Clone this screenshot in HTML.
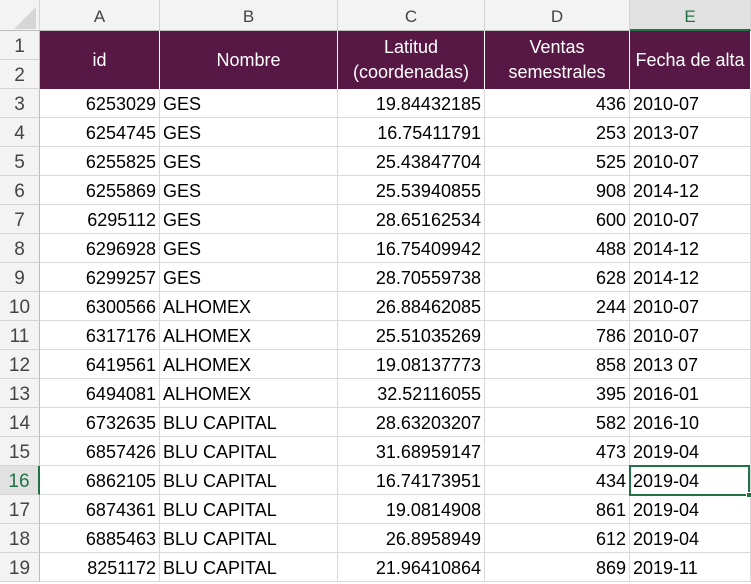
<!DOCTYPE html><html><head><style>
body{margin:0;width:751px;height:583px;overflow:hidden;background:#fff;font-family:"Liberation Sans",Arial,sans-serif;position:relative}
div{position:absolute;box-sizing:border-box}
.ch{top:0;height:31px;background:#f3f3f3;border-right:1px solid #d4d4d4;border-bottom:1px solid #bdbdbd;color:#444;font-size:17px;text-align:center;line-height:34px}
.rh{left:0;width:40px;background:#f3f3f3;border-right:1px solid #bdbdbd;border-bottom:1px solid #d4d4d4;color:#444;font-size:19px;text-align:center;line-height:31px}
.c{height:29px;border-right:1px solid #d9d9d9;border-bottom:1px solid #d9d9d9;font-size:18px;line-height:31px;color:#000;white-space:nowrap;padding:0 3px}
.r{text-align:right}
.h{top:31px;height:58px;background:#581845;color:#fff;border-right:1px solid #fff;font-size:18px;text-align:center;display:flex;align-items:center;justify-content:center;line-height:25px}
</style></head><body>
<div class="ch" style="left:0;width:40px;background:#f3f3f3"></div>
<svg style="position:absolute;left:14px;top:7px" width="22" height="22"><polygon points="22,0 22,22 0,22" fill="#d6d6d6"/></svg>
<div class="ch" style="left:40px;width:120px">A</div>
<div class="ch" style="left:160px;width:178px">B</div>
<div class="ch" style="left:338px;width:147px">C</div>
<div class="ch" style="left:485px;width:145px">D</div>
<div class="ch" style="left:630px;width:121px;background:#e1e1e1;color:#217346;border-bottom:2px solid #217346">E</div>
<div class="rh" style="top:31px;height:29px">1</div>
<div class="rh" style="top:60px;height:29px">2</div>
<div class="h" style="left:40px;width:120px">id</div>
<div class="h" style="left:160px;width:178px">Nombre</div>
<div class="h" style="left:338px;width:147px">Latitud<br>(coordenadas)</div>
<div class="h" style="left:485px;width:145px">Ventas<br>semestrales</div>
<div class="h" style="left:630px;width:121px">Fecha de alta</div>
<div id="rows"></div>
<script>
var d=[["6253029","GES","19.84432185","436","2010-07"],["6254745","GES","16.75411791","253","2013-07"],["6255825","GES","25.43847704","525","2010-07"],["6255869","GES","25.53940855","908","2014-12"],["6295112","GES","28.65162534","600","2010-07"],["6296928","GES","16.75409942","488","2014-12"],["6299257","GES","28.70559738","628","2014-12"],["6300566","ALHOMEX","26.88462085","244","2010-07"],["6317176","ALHOMEX","25.51035269","786","2010-07"],["6419561","ALHOMEX","19.08137773","858","2013 07"],["6494081","ALHOMEX","32.52116055","395","2016-01"],["6732635","BLU CAPITAL","28.63203207","582","2016-10"],["6857426","BLU CAPITAL","31.68959147","473","2019-04"],["6862105","BLU CAPITAL","16.74173951","434","2019-04"],["6874361","BLU CAPITAL","19.0814908","861","2019-04"],["6885463","BLU CAPITAL","26.8958949","612","2019-04"],["8251172","BLU CAPITAL","21.96410864","869","2019-11"]];
var L=[40,160,338,485,630],W=[120,178,147,145,121],A=[1,0,1,1,0],h="";
d.forEach(function(r,i){var t=89+i*29,n=i+3;h+='<div class="rh" style="top:'+t+'px;height:29px;'+(n==16?'background:#e1e1e1;color:#217346;border-right:2px solid #217346':'')+'">'+n+'</div>';
r.forEach(function(v,j){h+='<div class="c'+(A[j]?' r':'')+'" style="top:'+t+'px;left:'+L[j]+'px;width:'+W[j]+'px">'+v+'</div>'})});
h+='<div style="left:629px;top:465px;width:121px;height:31px;border:2px solid #217346"></div><div style="left:746px;top:492px;width:6px;height:6px;background:#217346;border:1px solid #fff"></div>';
document.getElementById("rows").outerHTML=h;
</script>
</body></html>
